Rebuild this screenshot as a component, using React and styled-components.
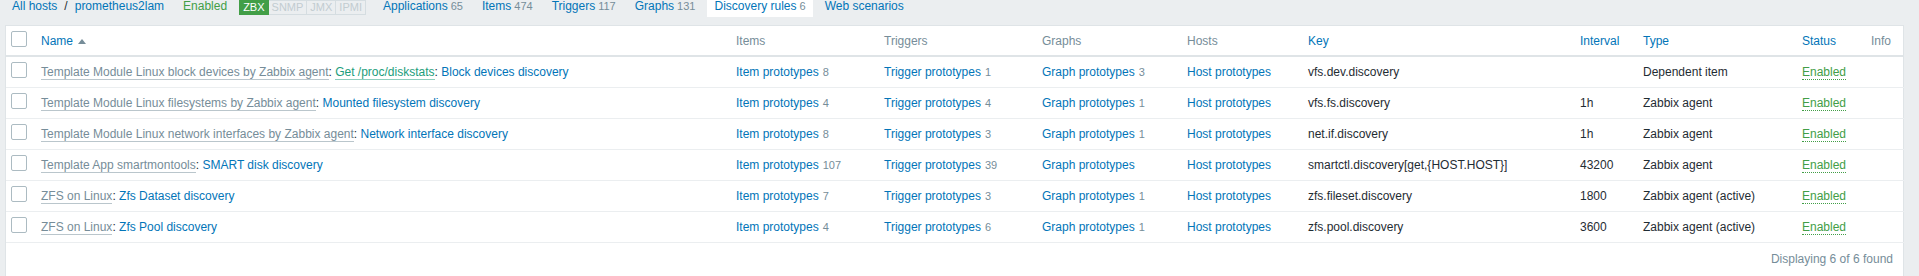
import styled, { createGlobalStyle } from "styled-components";

const GlobalStyle = createGlobalStyle`
  html, body {
    margin: 0;
    padding: 0;
    background: #ebeef0;
  }
  body {
    font-family: "Liberation Sans", Arial, sans-serif;
    font-size: 12px;
    color: #1f2c33;
  }
`;

const rules = [
  {
    template: "Template Module Linux block devices by Zabbix agent",
    master: "Get /proc/diskstats",
    name: "Block devices discovery",
    items: 8,
    triggers: 1,
    graphs: 3,
    key: "vfs.dev.discovery",
    interval: "",
    type: "Dependent item",
  },
  {
    template: "Template Module Linux filesystems by Zabbix agent",
    name: "Mounted filesystem discovery",
    items: 4,
    triggers: 4,
    graphs: 1,
    key: "vfs.fs.discovery",
    interval: "1h",
    type: "Zabbix agent",
  },
  {
    template: "Template Module Linux network interfaces by Zabbix agent",
    name: "Network interface discovery",
    items: 8,
    triggers: 3,
    graphs: 1,
    key: "net.if.discovery",
    interval: "1h",
    type: "Zabbix agent",
  },
  {
    template: "Template App smartmontools",
    name: "SMART disk discovery",
    items: 107,
    triggers: 39,
    graphs: null,
    key: "smartctl.discovery[get,{HOST.HOST}]",
    interval: "43200",
    type: "Zabbix agent",
  },
  {
    template: "ZFS on Linux",
    name: "Zfs Dataset discovery",
    items: 7,
    triggers: 3,
    graphs: 1,
    key: "zfs.fileset.discovery",
    interval: "1800",
    type: "Zabbix agent (active)",
  },
  {
    template: "ZFS on Linux",
    name: "Zfs Pool discovery",
    items: 4,
    triggers: 6,
    graphs: 1,
    key: "zfs.pool.discovery",
    interval: "3600",
    type: "Zabbix agent (active)",
  },
];

const tabs = [
  { label: "Applications", count: 65 },
  { label: "Items", count: 474 },
  { label: "Triggers", count: 117 },
  { label: "Graphs", count: 131 },
  { label: "Discovery rules", count: 6, active: true },
  { label: "Web scenarios" },
];

const columns = [
  { label: "", width: 30 },
  { label: "Name", width: 695, sort: true, arrow: true },
  { label: "Items", width: 148 },
  { label: "Triggers", width: 158 },
  { label: "Graphs", width: 145 },
  { label: "Hosts", width: 121 },
  { label: "Key", width: 272, sort: true },
  { label: "Interval", width: 63, sort: true },
  { label: "Type", width: 159, sort: true },
  { label: "Status", width: 69, sort: true },
  { label: "Info", width: 38 },
];

const App = () => {
  return (
    <Page>
      <GlobalStyle />
      <Nav>
        <Breadcrumbs>
          <Link>All hosts</Link>
          <Slash>/</Slash>
          <Link>prometheus2lam</Link>
        </Breadcrumbs>
        <HostStatus>Enabled</HostStatus>
        <Badges>
          <Badge $on>ZBX</Badge>
          <Badge>SNMP</Badge>
          <Badge>JMX</Badge>
          <Badge>IPMI</Badge>
        </Badges>
        <Tabs>
          {tabs.map((t) => (
            <Tab key={t.label} $active={t.active}>
              <Link>{t.label}</Link>
              {t.count !== undefined && <Count $nav>{t.count}</Count>}
            </Tab>
          ))}
        </Tabs>
      </Nav>

      <Panel>
        <Table>
          <colgroup>
            {columns.map((c, i) => (
              <col key={i} style={{ width: c.width }} />
            ))}
          </colgroup>
          <thead>
            <tr>
              <CheckCell as="th">
                <Checkbox />
              </CheckCell>
              {columns.slice(1).map((c) => (
                <Th key={c.label} $sort={c.sort}>
                  {c.label}
                  {c.arrow && <SortArrow />}
                </Th>
              ))}
            </tr>
          </thead>
          <tbody>
            {rules.map((r) => (
              <tr key={r.name}>
                <CheckCell>
                  <Checkbox />
                </CheckCell>
                <Td>
                  <AltLink>{r.template}</AltLink>
                  {": "}
                  {r.master && (
                    <>
                      <AltLink $teal>{r.master}</AltLink>
                      {": "}
                    </>
                  )}
                  <Link>{r.name}</Link>
                </Td>
                <Td>
                  <Link>Item prototypes</Link>
                  <Count>{r.items}</Count>
                </Td>
                <Td>
                  <Link>Trigger prototypes</Link>
                  <Count>{r.triggers}</Count>
                </Td>
                <Td>
                  <Link>Graph prototypes</Link>
                  {r.graphs !== null && <Count>{r.graphs}</Count>}
                </Td>
                <Td>
                  <Link>Host prototypes</Link>
                </Td>
                <Td>{r.key}</Td>
                <Td>{r.interval}</Td>
                <Td>{r.type}</Td>
                <Td>
                  <StatusLink>Enabled</StatusLink>
                </Td>
                <Td />
              </tr>
            ))}
          </tbody>
        </Table>
        <Paging>Displaying 6 of 6 found</Paging>
      </Panel>
    </Page>
  );
};

export default App;

const Page = styled.div`
  padding: 0 15px 0 5px;
`;

const Nav = styled.div`
  display: flex;
  align-items: flex-start;
  height: 17px;
  margin-bottom: 8px;
  line-height: 13px;
`;

const Breadcrumbs = styled.div`
  display: flex;
  padding-left: 7px;
`;

const Slash = styled.span`
  padding: 0 7px;
  color: #1f2c33;
`;

const Link = styled.span`
  color: #0275b8;
  cursor: pointer;
`;

const HostStatus = styled.span`
  margin-left: 19px;
  color: #429e47;
`;

const Badges = styled.div`
  display: flex;
  margin-left: 12px;
`;

const Badge = styled.span`
  box-sizing: border-box;
  height: 15px;
  padding: 0 3px;
  font-size: 11px;
  line-height: 13px;
  border: 1px solid ${(p) => (p.$on ? "#429e47" : "#d5dde1")};
  border-left-width: ${(p) => (p.$on ? "1px" : "0")};
  background: ${(p) => (p.$on ? "#429e47" : "transparent")};
  color: ${(p) => (p.$on ? "#ffffff" : "#c2ccd1")};
`;

const Tabs = styled.div`
  display: flex;
  gap: 5px;
  margin-left: 10px;
`;

const Tab = styled.div`
  height: 17px;
  padding: 0 7px;
  background: ${(p) => (p.$active ? "#ffffff" : "transparent")};
`;

const Count = styled.span`
  margin-left: ${(p) => (p.$nav ? "3px" : "4px")};
  color: #768d99;
  font-size: 11px;
`;

const Panel = styled.div`
  background: #ffffff;
  border: 1px solid #dfe4e7;
`;

const Table = styled.table`
  width: 100%;
  table-layout: fixed;
  border-collapse: collapse;
`;

const Th = styled.th`
  height: 29px;
  padding: 0 5px;
  text-align: left;
  font-weight: normal;
  white-space: nowrap;
  color: ${(p) => (p.$sort ? "#0275b8" : "#768d99")};
  border-bottom: 2px solid #dfe4e7;
`;

const Td = styled.td`
  height: 30px;
  padding: 0 5px;
  white-space: nowrap;
  color: #1f2c33;
  border-bottom: 1px solid #ebeef0;
`;

const CheckCell = styled.td`
  padding: 5px 5px 0;
  vertical-align: top;
  text-align: left;
  border-bottom: ${(p) => (p.as === "th" ? "2px solid #dfe4e7" : "1px solid #ebeef0")};
`;

const Checkbox = styled.span`
  display: block;
  box-sizing: border-box;
  width: 16px;
  height: 16px;
  border: 1px solid #acbbc2;
  border-radius: 2px;
  background: #ffffff;
`;

const SortArrow = styled.span`
  display: inline-block;
  margin-left: 5px;
  width: 0;
  height: 0;
  border-left: 4px solid transparent;
  border-right: 4px solid transparent;
  border-bottom: 5px solid #768d99;
  vertical-align: 1px;
`;

const AltLink = styled.span`
  color: ${(p) => (p.$teal ? "#1c9d7b" : "#768d99")};
  border-bottom: 1px solid
    ${(p) => (p.$teal ? "rgba(28, 157, 123, 0.5)" : "rgba(118, 141, 153, 0.5)")};
  cursor: pointer;
`;

const StatusLink = styled.span`
  color: #429e47;
  border-bottom: 1px dotted #429e47;
  cursor: pointer;
`;

const Paging = styled.div`
  padding: 9px 10px 15px;
  line-height: 14px;
  text-align: right;
  color: #768d99;
`;
